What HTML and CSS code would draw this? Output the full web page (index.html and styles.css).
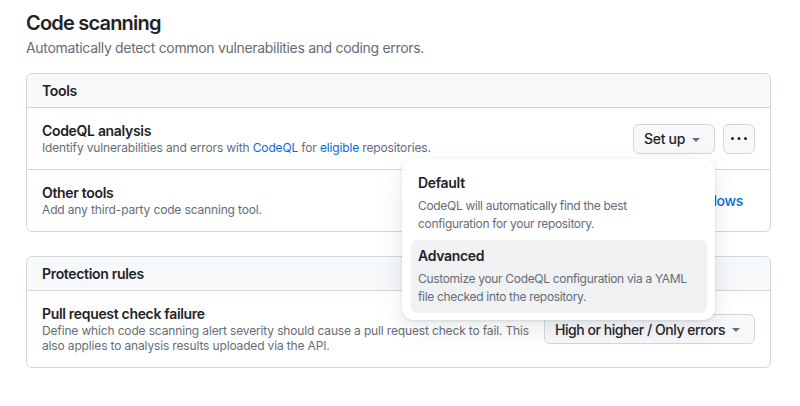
FILE: index.html
```html
<!DOCTYPE html>
<html lang="en">
<head>
<meta charset="UTF-8">
<meta name="viewport" content="width=device-width, initial-scale=1.0">
<title>Code scanning</title>
<link rel="stylesheet" href="styles.css">
</head>
<body>

<div class="page">
<h1 class="title">Code scanning</h1>
<p class="subtitle">Automatically detect common vulnerabilities and coding errors.</p>

<div class="box">
<div class="box-header">Tools</div>
<div class="box-row">
<div class="row-text">
<p class="row-title">CodeQL analysis</p>
<p class="row-desc">Identify vulnerabilities and errors with <a href="#">CodeQL</a> for <a href="#">eligible</a> repositories.</p>
</div>
<div class="actions">
<span class="menu-anchor">
<button class="btn" type="button">Set up
<svg class="caret" viewBox="0 0 16 16" width="16" height="16"><path d="m4.427 7.427 3.396 3.396a.25.25 0 0 0 .354 0l3.396-3.396A.25.25 0 0 0 11.396 7H4.604a.25.25 0 0 0-.177.427Z"/></svg>
</button>
<div class="menu">
<div class="menu-item">
<p class="menu-title">Default</p>
<p class="menu-desc">CodeQL will automatically find the best configuration for your repository.</p>
</div>
<div class="menu-item active">
<p class="menu-title">Advanced</p>
<p class="menu-desc">Customize your CodeQL configuration via a YAML file checked into the repository.</p>
</div>
</div>
</span>
<button class="btn btn-icon" type="button" aria-label="More">
<svg viewBox="0 0 16 16" width="16" height="16"><path d="M8 9a1.5 1.5 0 1 0 0-3 1.5 1.5 0 0 0 0 3ZM1.5 9a1.5 1.5 0 1 0 0-3 1.5 1.5 0 0 0 0 3Zm13 0a1.5 1.5 0 1 0 0-3 1.5 1.5 0 0 0 0 3Z"/></svg>
</button>
</div>
</div>
<div class="box-row">
<div class="row-text">
<p class="row-title">Other tools</p>
<p class="row-desc">Add any third-party code scanning tool.</p>
</div>
<a class="explore" href="#">Explore workflows</a>
</div>
</div>

<div class="box">
<div class="box-header">Protection rules</div>
<div class="box-row">
<div class="row-text">
<p class="row-title">Pull request check failure</p>
<p class="row-desc">Define which code scanning alert severity should cause a pull request check to fail. This also applies to analysis results uploaded via the API.</p>
</div>
<button class="btn btn-wide" type="button">High or higher / Only errors
<svg class="caret" viewBox="0 0 16 16" width="16" height="16"><path d="m4.427 7.427 3.396 3.396a.25.25 0 0 0 .354 0l3.396-3.396A.25.25 0 0 0 11.396 7H4.604a.25.25 0 0 0-.177.427Z"/></svg>
</button>
</div>
</div>
</div>

</body>
</html>
```

FILE: styles.css
```css
body {
    margin: 0;
    background-color: #fff;
    font-family: Inter, "Liberation Sans", sans-serif;
    letter-spacing: -0.02em;
    color: #1f2328;
}
p {
    margin: 0;
}
.page {
    padding: 8px 29px 0 26px;
}
.title {
    margin: 0;
    font-size: 20px;
    line-height: 30px;
    font-weight: 600;
    letter-spacing: -0.8px;
}
.subtitle {
    font-size: 14px;
    line-height: 20px;
    color: #656d76;
}
.box {
    margin-top: 15px;
    border: 1px solid #d0d7de;
    border-radius: 6px;
}
.box + .box {
    margin-top: 24px;
}
.box-header {
    height: 33px;
    display: flex;
    align-items: center;
    padding: 0 15px;
    background-color: #f6f8fa;
    border-bottom: 1px solid #d0d7de;
    border-radius: 6px 6px 0 0;
    font-size: 14px;
    font-weight: 600;
}
.box-row {
    display: flex;
    align-items: center;
    justify-content: space-between;
    gap: 12px;
    padding: 14px 15px;
}
.box-row + .box-row {
    border-top: 1px solid #d0d7de;
}
.row-title {
    font-size: 14px;
    line-height: 18px;
    font-weight: 600;
}
.row-desc {
    font-size: 12px;
    line-height: 15px;
    letter-spacing: -0.15px;
    color: #656d76;
}
.row-desc a {
    color: #0969da;
    text-decoration: none;
}
.actions {
    display: flex;
    gap: 8px;
}
.btn {
    display: inline-flex;
    align-items: center;
    gap: 3px;
    height: 30px;
    padding: 0 10px;
    border: 1px solid #d0d7de;
    border-radius: 6px;
    background-color: #f6f8fa;
    color: #1f2328;
    font-family: inherit;
    font-size: 14px;
    font-weight: 500;
    letter-spacing: inherit;
    cursor: pointer;
    white-space: nowrap;
}
.btn-wide {
    flex-shrink: 0;
    letter-spacing: -0.45px;
}
.btn svg {
    fill: currentColor;
}
.caret {
    fill: #656d76 !important;
}
.btn-icon {
    width: 32px;
    padding: 0;
    justify-content: center;
}
.explore {
    margin-right: 12px;
    color: #0969da;
    font-size: 14px;
    font-weight: 500;
    text-decoration: none;
}
.menu-anchor {
    position: relative;
}
.menu {
    position: absolute;
    top: 35px;
    right: 0;
    width: 296px;
    padding: 8px 8px 7px 9px;
    background-color: #fff;
    border-radius: 12px;
    box-shadow: 0 1px 3px rgba(31, 35, 40, 0.12), 0 8px 24px rgba(66, 74, 83, 0.12);
    z-index: 10;
}
.menu-item {
    padding: 6px 8px 7px 7px;
    border-radius: 6px;
}
.menu-item.active {
    background-color: #eff1f3;
}
.menu-title {
    font-size: 14px;
    line-height: 20px;
    font-weight: 600;
}
.menu-desc {
    margin-top: 4px;
    font-size: 12px;
    line-height: 18px;
    color: #656d76;
}
```
